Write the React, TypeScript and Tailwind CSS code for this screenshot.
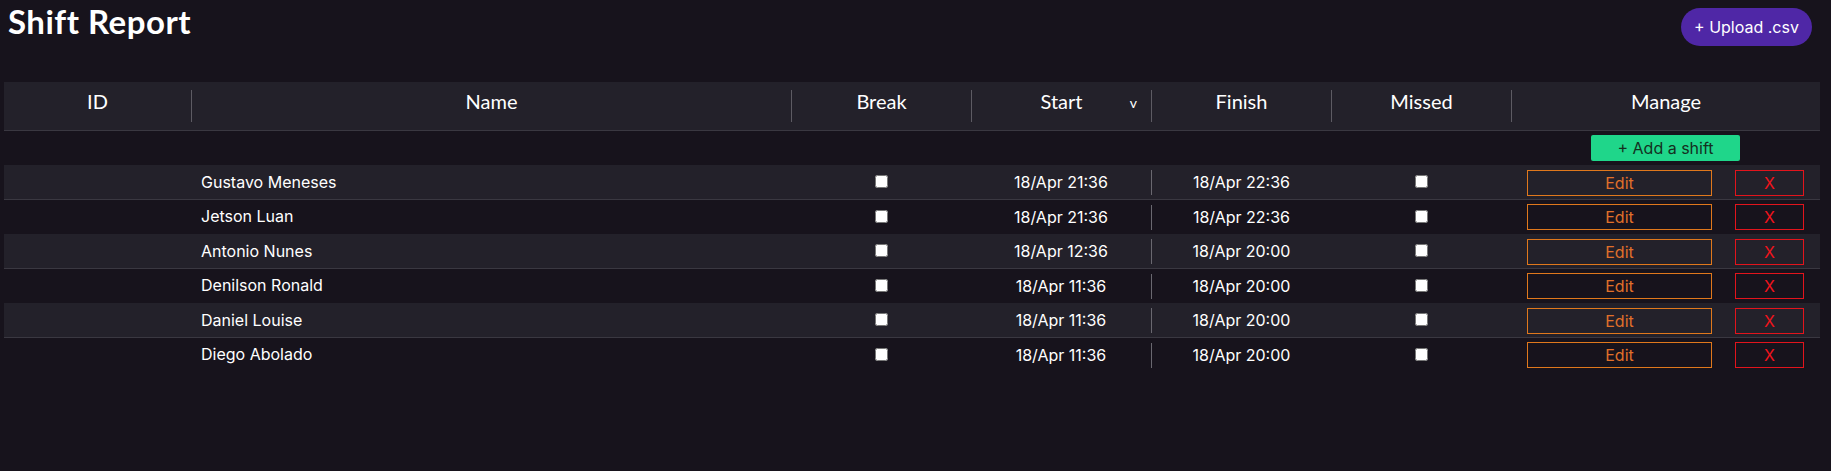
import React from "react";

type Shift = {
  name: string;
  start: string;
  finish: string;
};

const shifts: Shift[] = [
  { name: "Gustavo Meneses", start: "18/Apr 21:36", finish: "18/Apr 22:36" },
  { name: "Jetson Luan", start: "18/Apr 21:36", finish: "18/Apr 22:36" },
  { name: "Antonio Nunes", start: "18/Apr 12:36", finish: "18/Apr 20:00" },
  { name: "Denilson Ronald", start: "18/Apr 11:36", finish: "18/Apr 20:00" },
  { name: "Daniel Louise", start: "18/Apr 11:36", finish: "18/Apr 20:00" },
  { name: "Diego Abolado", start: "18/Apr 11:36", finish: "18/Apr 20:00" },
];

const gridCols = "grid grid-cols-[187px_600px_180px_180px_180px_180px_309px]";

const HeaderCell = ({ label, divider = true, sort = false }: { label: string; divider?: boolean; sort?: boolean }) => (
  <div className={"relative my-2 h-8 flex items-start justify-center " + (divider ? "border-l border-[#5d5b63]" : "")}>
    <span className="-mt-[3px]">{label}</span>
    {sort ? <span className="absolute right-[14px] -top-[1px] text-[14px]">v</span> : null}
  </div>
);

export default function App() {
  return (
    <div className="min-h-screen bg-[#17131c] text-white font-['Inter',sans-serif]">
      <div className="h-[82px] flex items-start justify-between">
        <h1 className="pl-[8px] pt-[2px] text-[33px] leading-[38px] tracking-[0.5px] font-bold font-['Lato',sans-serif]">Shift Report</h1>
        <button className="mt-[8px] mr-[19px] h-[38px] w-[131px] rounded-full bg-[#4f27a6] text-[16px] text-white">
          + Upload .csv
        </button>
      </div>

      <div className="ml-[4px] w-[1816px]">
        {/* header */}
        <div className={gridCols + " bg-[#23212a] border-b border-[#3a3841] font-['Lato',sans-serif] text-[20px] leading-[28px]"}>
          <HeaderCell label="ID" divider={false} />
          <HeaderCell label="Name" />
          <HeaderCell label="Break" />
          <HeaderCell label="Start" sort />
          <HeaderCell label="Finish" />
          <HeaderCell label="Missed" />
          <HeaderCell label="Manage" />
        </div>

        {/* add row */}
        <div className={gridCols + " h-[34px]"}>
          <div className="col-start-7 flex justify-center pt-[4px]">
            <button className="h-[26px] w-[149px] rounded-[2px] bg-[#1fd68a] text-[16px] text-[#14301f]">
              + Add a shift
            </button>
          </div>
        </div>

        {/* rows */}
        {shifts.map((s, i) => (
          <div
            key={s.name}
            className={
              gridCols +
              " h-[34.5px] text-[16px] " +
              (i % 2 === 0 ? "bg-[#23212a] border-b border-[#3a3841]" : "bg-[#17131c]")
            }
          >
            <div />
            <div className="flex items-center pl-[10px] pb-[2px]">{s.name}</div>
            <div className="flex items-center justify-center pb-[2px]">
              <input type="checkbox" className="w-[13px] h-[13px]" />
            </div>
            <div className="flex items-center justify-center pb-[1px]">{s.start}</div>
            <div className="my-[5px] flex items-center justify-center border-l border-[#6a6870] pb-[1px]">{s.finish}</div>
            <div className="flex items-center justify-center pb-[2px]">
              <input type="checkbox" className="w-[13px] h-[13px]" />
            </div>
            <div className="flex items-center justify-between px-[16px]">
              <button className="h-[26px] w-[185px] border border-[#e0781c] text-[#e0702a] text-[16px]">Edit</button>
              <button className="h-[26px] w-[69px] border border-[#e3141c] text-[#f0141c] text-[16px]">X</button>
            </div>
          </div>
        ))}
      </div>
    </div>
  );
}
